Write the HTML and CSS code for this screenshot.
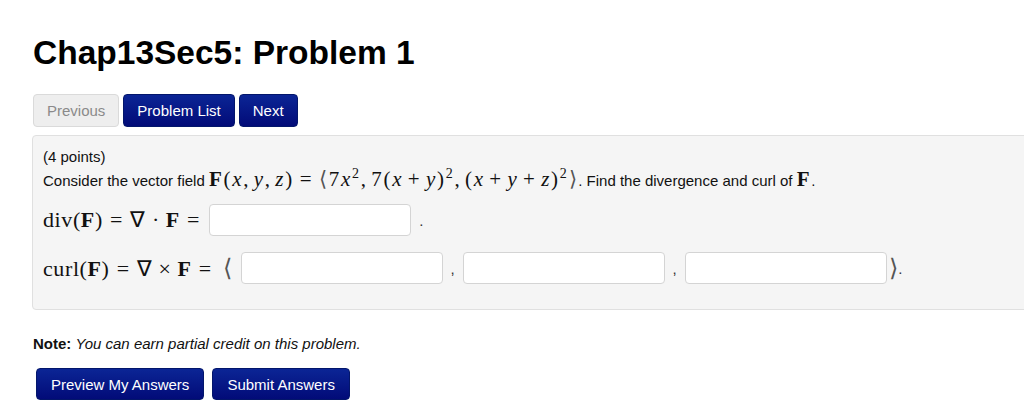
FILE: index.html
```html
<!DOCTYPE html>
<html>
<head>
<meta charset="utf-8">
<link rel="stylesheet" href="styles.css">
</head>
<body>
<div class="page">
  <h1 class="title">Chap13Sec5: Problem 1</h1>
  <div class="nav">
    <span class="btn btn-disabled">Previous</span>
    <span class="btn btn-primary">Problem List</span>
    <span class="btn btn-primary">Next</span>
  </div>
  <div class="problem">
    <div class="points">(4 points)</div>
    <div class="statement">Consider the vector field <span class="math inline"><b class="bf">F</b>(<i>x</i><span class="pc">,</span><i>y</i><span class="pc">,</span><i>z</i>)<span class="rel">=</span><span class="ang">⟨</span>7<i>x</i><sup>2</sup><span class="pc">,</span>7(<i>x</i><span class="bin">+</span><i>y</i>)<sup>2</sup><span class="pc">,</span>(<i>x</i><span class="bin">+</span><i>y</i><span class="bin">+</span><i>z</i>)<sup>2</sup><span class="ang">⟩</span></span>. Find the divergence and curl of <span class="math inline"><b class="bf">F</b></span>.</div>
    <div class="row row-div">
      <span class="math big">div(<b class="bf">F</b>)<span class="rel">=</span>∇<span class="bin">·</span><b class="bf">F</b><span class="rel">=</span></span>
      <span class="field"></span>
      <span class="punct">.</span>
    </div>
    <div class="row row-curl">
      <span class="math big">curl(<b class="bf">F</b>)<span class="rel">=</span>∇<span class="bin">×</span><b class="bf">F</b><span class="rel">=</span><span class="ang">⟨</span></span>
      <span class="field"></span>
      <span class="punct">,</span>
      <span class="field"></span>
      <span class="punct">,</span>
      <span class="field"></span>
      <span class="math big close"><span class="ang">⟩</span></span><span class="punct tight">.</span>
    </div>
  </div>
  <p class="note"><b>Note:</b> <i>You can earn partial credit on this problem.</i></p>
  <div class="actions">
    <span class="btn btn-primary btn-lg">Preview My Answers</span>
    <span class="btn btn-primary btn-lg">Submit Answers</span>
  </div>
</div>
</body>
</html>
```

FILE: styles.css
```css
html, body {
  margin: 0;
  padding: 0;
  background: #fff;
  overflow: hidden;
}
body {
  font-family: "Liberation Sans", Arial, sans-serif;
  color: #111;
  font-size: 15px;
}
.page {
  padding: 33px 0 0 33px;
  width: 1100px;
}
.title {
  margin: 0;
  font-size: 33.5px;
  line-height: 40px;
  font-weight: bold;
  color: #000;
}
.nav {
  display: flex;
  gap: 4px;
  margin-top: 21px;
}
.btn {
  display: inline-flex;
  align-items: center;
  justify-content: center;
  height: 33px;
  box-sizing: border-box;
  padding: 0 13px;
  border-radius: 4px;
  font-size: 15px;
}
.btn-disabled {
  background: #eeeeee;
  border: 1px solid #dadada;
  color: #8a8a8a;
}
.btn-primary {
  background: linear-gradient(#0b2595, #020b78);
  border: 1px solid #03166b;
  color: #fff;
}
.problem {
  margin-top: 8px;
  margin-left: -1px;
  width: 1060px;
  height: 175px;
  box-sizing: border-box;
  background: #f5f5f5;
  border: 1px solid #e0e0e0;
  border-radius: 4px;
  padding: 12px 10px 0 10px;
}
.points {
  line-height: 18px;
}
.statement {
  line-height: 22px;
  margin-top: 2px;
}
.math {
  font-family: "Liberation Serif", "Times New Roman", serif;
  font-size: 20px;
  letter-spacing: 0.6px;
  color: #111;
}
.math.inline {
  font-size: 21px;
  letter-spacing: 1.7px;
}
.math i {
  font-style: italic;
}
.math sup {
  font-size: 14px;
  line-height: 0;
}
.bf {
  font-weight: bold;
}
.rel {
  margin: 0 0.28em;
}
.bin {
  margin: 0 0.22em;
}
.pc {
  margin-right: 0.17em;
}
.ang {
  color: #555;
}
.row {
  display: flex;
  align-items: center;
}
.row-div {
  margin-top: 12px;
  height: 32px;
}
.row-curl {
  margin-top: 16px;
  height: 32px;
}
.big {
  font-size: 22px;
  margin-right: 8px;
}
.big .rel {
  margin: 0 0.33em;
}
.big .bin {
  margin: 0 0.27em;
}
.row-div .big {
  margin-right: 2px;
}
.big .ang {
  font-size: 24px;
  margin-left: 4px;
}
.field {
  display: inline-block;
  width: 202px;
  height: 32px;
  box-sizing: border-box;
  background: #fff;
  border: 1px solid #d4d4d4;
  border-radius: 4px;
}
.punct {
  display: inline-block;
  width: 20px;
  text-align: center;
  color: #333;
}
.big.close {
  margin-left: 2px;
  margin-right: 0;
}
.big.close .ang {
  margin-left: 0;
}
.punct.tight {
  width: auto;
}
.note {
  margin: 25px 0 0 0;
  line-height: 18px;
}
.actions {
  display: flex;
  gap: 8px;
  margin: 15px 0 0 3px;
}
.btn-lg {
  height: 32px;
  padding: 0 14px;
}
```
